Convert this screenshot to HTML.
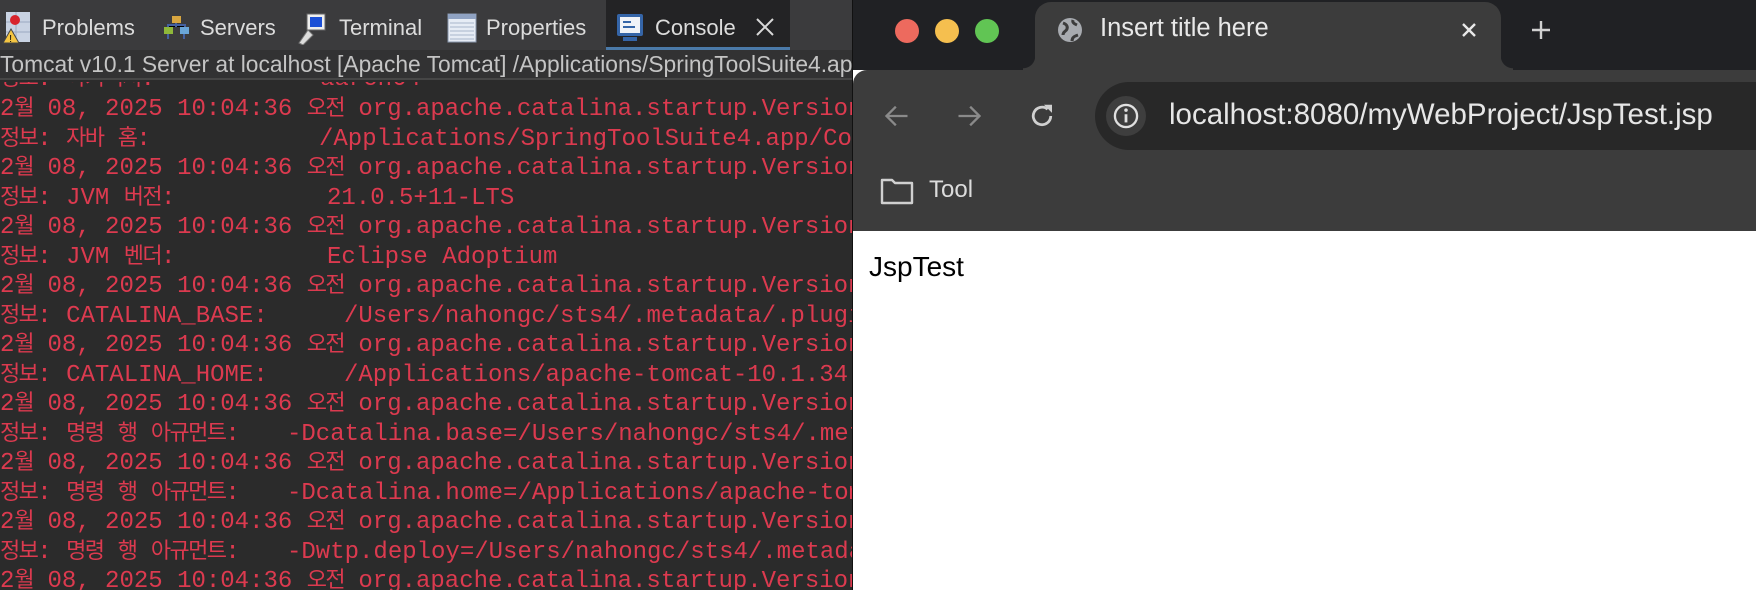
<!DOCTYPE html>
<html><head><meta charset="utf-8">
<style>
*{margin:0;padding:0;box-sizing:border-box}
body{width:1756px;height:590px;overflow:hidden;background:#2b2b2b;position:relative;font-family:"Liberation Sans","Noto Sans CJK KR",sans-serif}
.abs{position:absolute}
#ecl{position:absolute;left:0;top:0;width:852px;height:590px;overflow:hidden;background:#2b2b2b}
#tabs{position:absolute;left:0;top:0;width:852px;height:50px;background:#3b3b3d}
.tt{position:absolute;top:14px;font-size:22px;color:#dcdcdc;line-height:28px;white-space:nowrap}
#status{position:absolute;left:0;top:50px;width:852px;height:30px;background:#323233;border-bottom:2px solid #464646;font-size:22.8px;color:#c4c4c4;line-height:28px;white-space:nowrap;overflow:hidden}
.ln{position:absolute;left:0;height:30px;line-height:30px;font-family:"Liberation Mono","Noto Sans CJK KR",monospace;font-size:24px;color:#dc3a4f;white-space:pre}
.k{font-family:"Noto Sans CJK KR",sans-serif;font-size:22px;letter-spacing:-1.6px;line-height:20px}
.v{position:absolute;top:0}
#br{position:absolute;left:852px;top:0;width:904px;height:590px;background:#fff;border-left:1px solid #111}
</style></head><body>
<div id="ecl">
 <div id="tabs">
  <div class="abs" style="left:606px;top:0;width:184px;height:48px;background:#232325"></div>
  <div class="abs" style="left:606px;top:47px;width:184px;height:3px;background:#4a79a8"></div>
  <svg class="abs" style="left:2px;top:12px" width="30" height="32" viewBox="0 0 30 32"><rect x="4" y="0" width="24" height="30" fill="#c9d3e3"/><path d="M14 0v30M4 10h24M4 20h24" stroke="#9aa9c0"/><circle cx="13" cy="8" r="5" fill="#d8232c"/><path d="M1 31 L9 17 L17 31Z" fill="#f4c542" stroke="#444"/><text x="7.3" y="30" font-size="10" font-family="Liberation Sans" fill="#000">!</text></svg>
  <div class="tt" style="left:42px">Problems</div>
  <svg class="abs" style="left:163px;top:16px" width="28" height="24" viewBox="0 0 28 24"><rect x="9" y="0" width="9" height="7" fill="#d8a640"/><rect x="1" y="11" width="9" height="7" fill="#8fb83a"/><rect x="17" y="11" width="9" height="7" fill="#6aa6d8"/><path d="M13 7v4M5 11V9h17v2M5 18v5M21 18v5" stroke="#4460a0" stroke-width="2"/></svg>
  <div class="tt" style="left:200px">Servers</div>
  <svg class="abs" style="left:297px;top:13px" width="32" height="32" viewBox="0 0 32 32"><rect x="10" y="1" width="18" height="16" fill="#eee" stroke="#666"/><rect x="13" y="4" width="12" height="10" fill="#1b4fd6"/><path d="M2 30 L11 17 L16 22 L6 32Z" fill="#ddd" stroke="#777"/></svg>
  <div class="tt" style="left:339px">Terminal</div>
  <svg class="abs" style="left:447px;top:13px" width="30" height="30" viewBox="0 0 30 30"><rect x="1" y="1" width="28" height="28" fill="#e6ecf5" stroke="#8a97ad"/><rect x="1" y="1" width="28" height="5" fill="#8fa2c2"/><path d="M3 10h24M3 14h24M3 18h24M3 22h24M3 26h24" stroke="#a8b6cc"/></svg>
  <div class="tt" style="left:486px">Properties</div>
  <svg class="abs" style="left:615px;top:13px" width="30" height="30" viewBox="0 0 30 30"><rect x="2" y="1" width="26" height="22" rx="2" fill="#3565a8"/><rect x="5" y="4" width="20" height="16" fill="#f0f3f8"/><path d="M8 9h8M8 14h12" stroke="#3565a8" stroke-width="2"/><rect x="8" y="24" width="14" height="4" fill="#3565a8"/></svg>
  <div class="tt" style="left:655px">Console</div>
  <svg class="abs" style="left:756px;top:18px" width="18" height="18" viewBox="0 0 18 18"><path d="M1 1L17 17M17 1L1 17" stroke="#d8d8d8" stroke-width="2"/></svg>
 </div>
 <div id="status">Tomcat v10.1 Server at localhost [Apache Tomcat] /Applications/SpringToolSuite4.app</div>
 <div style="position:absolute;left:0;top:82px;width:852px;height:508px;overflow:hidden">
  <div class="ln" style="top:-17px"><span class="k">정보</span>: <span class="k">아키텍처</span>:<span class="v" style="left:320px">aarch64</span></div>
  <div class="ln" style="top:13px">2<span class="k">월</span> 08, 2025 10:04:36 <span class="k">오전</span> org.apache.catalina.startup.VersionLoggerListener log</div>
  <div class="ln" style="top:43px"><span class="k">정보</span>: <span class="k">자바</span> <span class="k">홈</span>:<span class="v" style="left:319px">/Applications/SpringToolSuite4.app/Contents</span></div>
  <div class="ln" style="top:72px">2<span class="k">월</span> 08, 2025 10:04:36 <span class="k">오전</span> org.apache.catalina.startup.VersionLoggerListener log</div>
  <div class="ln" style="top:102px"><span class="k">정보</span>: JVM <span class="k">버전</span>:<span class="v" style="left:327px">21.0.5+11-LTS</span></div>
  <div class="ln" style="top:131px">2<span class="k">월</span> 08, 2025 10:04:36 <span class="k">오전</span> org.apache.catalina.startup.VersionLoggerListener log</div>
  <div class="ln" style="top:161px"><span class="k">정보</span>: JVM <span class="k">벤더</span>:<span class="v" style="left:327px">Eclipse Adoptium</span></div>
  <div class="ln" style="top:190px">2<span class="k">월</span> 08, 2025 10:04:36 <span class="k">오전</span> org.apache.catalina.startup.VersionLoggerListener log</div>
  <div class="ln" style="top:220px"><span class="k">정보</span>: CATALINA_BASE:<span class="v" style="left:344px">/Users/nahongc/sts4/.metadata/.plugins</span></div>
  <div class="ln" style="top:249px">2<span class="k">월</span> 08, 2025 10:04:36 <span class="k">오전</span> org.apache.catalina.startup.VersionLoggerListener log</div>
  <div class="ln" style="top:279px"><span class="k">정보</span>: CATALINA_HOME:<span class="v" style="left:344px">/Applications/apache-tomcat-10.1.34</span></div>
  <div class="ln" style="top:308px">2<span class="k">월</span> 08, 2025 10:04:36 <span class="k">오전</span> org.apache.catalina.startup.VersionLoggerListener log</div>
  <div class="ln" style="top:338px"><span class="k">정보</span>: <span class="k">명령</span> <span class="k">행</span> <span class="k">아규먼트</span>:<span class="v" style="left:287px">-Dcatalina.base=/Users/nahongc/sts4/.metadata</span></div>
  <div class="ln" style="top:367px">2<span class="k">월</span> 08, 2025 10:04:36 <span class="k">오전</span> org.apache.catalina.startup.VersionLoggerListener log</div>
  <div class="ln" style="top:397px"><span class="k">정보</span>: <span class="k">명령</span> <span class="k">행</span> <span class="k">아규먼트</span>:<span class="v" style="left:287px">-Dcatalina.home=/Applications/apache-tomcat</span></div>
  <div class="ln" style="top:426px">2<span class="k">월</span> 08, 2025 10:04:36 <span class="k">오전</span> org.apache.catalina.startup.VersionLoggerListener log</div>
  <div class="ln" style="top:456px"><span class="k">정보</span>: <span class="k">명령</span> <span class="k">행</span> <span class="k">아규먼트</span>:<span class="v" style="left:287px">-Dwtp.deploy=/Users/nahongc/sts4/.metadata</span></div>
  <div class="ln" style="top:485px">2<span class="k">월</span> 08, 2025 10:04:36 <span class="k">오전</span> org.apache.catalina.startup.VersionLoggerListener log</div>
 </div>
</div>
<div id="br">
 <div class="abs" style="left:0;top:0;width:904px;height:70px;background:#202124"></div>
 <div class="abs" style="left:0;top:70px;width:904px;height:161px;background:#3c3c3c;border-top-left-radius:14px"></div>
 <div class="abs" style="left:42px;top:19px;width:24px;height:24px;border-radius:50%;background:#ed6a5e"></div>
 <div class="abs" style="left:82px;top:19px;width:24px;height:24px;border-radius:50%;background:#f5bf4f"></div>
 <div class="abs" style="left:122px;top:19px;width:24px;height:24px;border-radius:50%;background:#61c554"></div>
 <div class="abs" style="left:182px;top:2px;width:466px;height:70px;background:#3c3c3c;border-radius:16px 16px 0 0"></div>
 <div class="abs" style="left:170px;top:56px;width:12px;height:14px;background:radial-gradient(circle at 0 0,#202124 12px,#3c3c3c 12.5px)"></div>
 <div class="abs" style="left:648px;top:56px;width:12px;height:14px;background:radial-gradient(circle at 100% 0,#202124 12px,#3c3c3c 12.5px)"></div>
 <svg class="abs" style="left:204px;top:17px" width="26" height="26" viewBox="0 0 26 26"><circle cx="13" cy="13" r="12" fill="#a8abb0"/><path d="M6 6c3 1 5 3 4 6s-4 2-4 6M16 3c-1 3 2 4 4 5M15 24c0-4 3-5 6-6" stroke="#3c3c3c" stroke-width="3" fill="none"/></svg>
 <div class="abs" style="left:247px;top:13px;font-size:25.5px;color:#e8e8e8;line-height:30px">Insert title here</div>
 <svg class="abs" style="left:607px;top:21px" width="18" height="18" viewBox="0 0 18 18"><path d="M3 3L15 15M15 3L3 15" stroke="#e8e8e8" stroke-width="2.4"/></svg>
 <svg class="abs" style="left:677px;top:19px" width="22" height="22" viewBox="0 0 22 22"><path d="M11 2v18M2 11h18" stroke="#d0d0d0" stroke-width="2.4"/></svg>
 <svg class="abs" style="left:30px;top:102px" width="28" height="28" viewBox="0 0 24 24"><path d="M21 12H4M11 4L3 12l8 8" stroke="#8a8a8a" stroke-width="2" fill="none"/></svg>
 <svg class="abs" style="left:102px;top:102px" width="28" height="28" viewBox="0 0 24 24"><path d="M3 12h17M13 4l8 8-8 8" stroke="#8a8a8a" stroke-width="2" fill="none"/></svg>
 <svg class="abs" style="left:174px;top:101px" width="30" height="30" viewBox="0 0 24 24"><path d="M19 12a7 7 0 1 1-2.5-5.4" stroke="#d0d0d0" stroke-width="2.2" fill="none"/><path d="M13.5 3h6.5v6.5z" fill="#d0d0d0"/></svg>
 <div class="abs" style="left:242px;top:82px;width:700px;height:68px;border-radius:34px;background:#282828"></div>
 <div class="abs" style="left:253px;top:96px;width:40px;height:40px;border-radius:50%;background:#3e3e3e"></div>
 <svg class="abs" style="left:259px;top:102px" width="28" height="28" viewBox="0 0 24 24"><circle cx="12" cy="12" r="9.5" stroke="#e0e0e0" stroke-width="2" fill="none"/><path d="M12 10.5v7" stroke="#e0e0e0" stroke-width="2.4"/><circle cx="12" cy="7" r="1.5" fill="#e0e0e0"/></svg>
 <div class="abs" style="left:316px;top:97px;font-size:29.5px;color:#e6e6e6;line-height:36px;white-space:nowrap">localhost:8080/myWebProject/JspTest.jsp</div>
 <svg class="abs" style="left:27px;top:177px" width="34" height="28" viewBox="0 0 34 28"><path d="M2 3h10l3 3h17v20H2z" stroke="#d0d0d0" stroke-width="2.4" fill="none" stroke-linejoin="round"/></svg>
 <div class="abs" style="left:76px;top:175px;font-size:24px;color:#dcdcdc;line-height:30px">Tool</div>
 <div class="abs" style="left:16px;top:250px;font-size:28px;color:#000;line-height:34px">JspTest</div>
</div>
</body></html>
